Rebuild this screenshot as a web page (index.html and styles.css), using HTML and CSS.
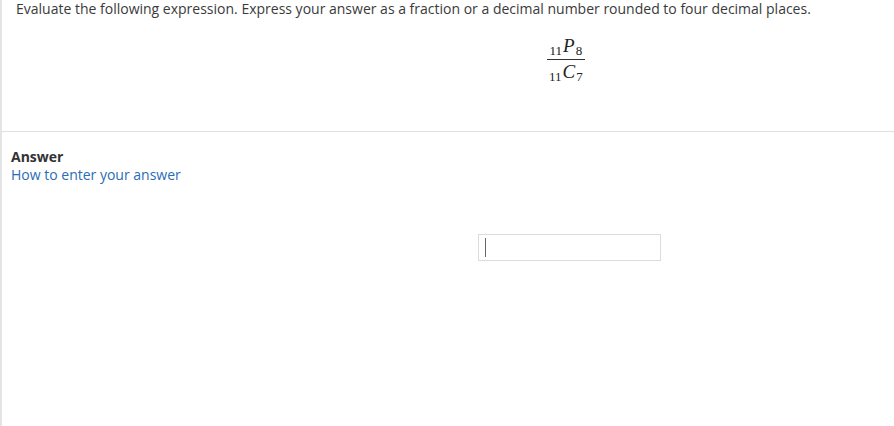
FILE: index.html
```html
<!DOCTYPE html>
<html>
<head>
<meta charset="utf-8">
<link rel="stylesheet" href="styles.css">
</head>
<body>
<div class="page">
  <section class="question">
    <p class="prompt">Evaluate the following expression. Express your answer as a fraction or a decimal number rounded to four decimal places.</p>
    <div class="math">
      <div class="frac">
        <div class="num"><span class="sub">11</span><i>P</i><span class="sub">8</span></div>
        <div class="den"><span class="sub">11</span><i>C</i><span class="sub">7</span></div>
      </div>
    </div>
  </section>
  <section class="answer">
    <div class="label">Answer</div>
    <a class="help" href="#">How to enter your answer</a>
    <div class="field-row">
      <div class="field"><span class="caret"></span></div>
    </div>
  </section>
</div>
</body>
</html>
```
FILE: styles.css
```css
html, body {
  margin: 0;
  padding: 0;
  background: #fff;
}
.page {
  border-left: 2px solid #e4e4e4;
  height: 426px;
  box-sizing: border-box;
  font-family: "Open Sans", "Liberation Sans", sans-serif;
  color: #333;
}
.question {
  height: 132px;
  box-sizing: border-box;
  border-bottom: 1px solid #e0e0e0;
  padding: 0 14px;
}
.prompt {
  margin: 0;
  font-size: 14px;
  line-height: 18px;
  color: #3a3a3a;
}
.math {
  display: flex;
  padding-left: 531px;
  margin-top: 19px;
}
.frac {
  display: flex;
  flex-direction: column;
  align-items: stretch;
  font-family: "Liberation Serif", "DejaVu Serif", serif;
  color: #222;
  font-size: 19px;
}
.num, .den {
  padding: 0 1px;
  line-height: 18px;
  white-space: nowrap;
  text-align: center;
}
.num {
  border-bottom: 1px solid #333;
  padding-bottom: 2px;
}
.den {
  padding-top: 3px;
}
.sub {
  font-size: 13px;
  position: relative;
  top: 3px;
  margin: 0 1px;
}
.answer {
  padding: 16px 9px 0;
}
.label {
  font-weight: 700;
  font-size: 14px;
  line-height: 18px;
  color: #333;
}
.help {
  display: block;
  font-size: 14px;
  line-height: 18px;
  color: #2a6db5;
  text-decoration: none;
}
.field-row {
  display: flex;
  padding-left: 467px;
  margin-top: 50px;
}
.field {
  width: 183px;
  height: 27px;
  box-sizing: border-box;
  border: 1px solid #dcdcdc;
  display: flex;
  align-items: center;
  padding-left: 6px;
}
.caret {
  width: 1px;
  height: 19px;
  background: #666;
}
```
